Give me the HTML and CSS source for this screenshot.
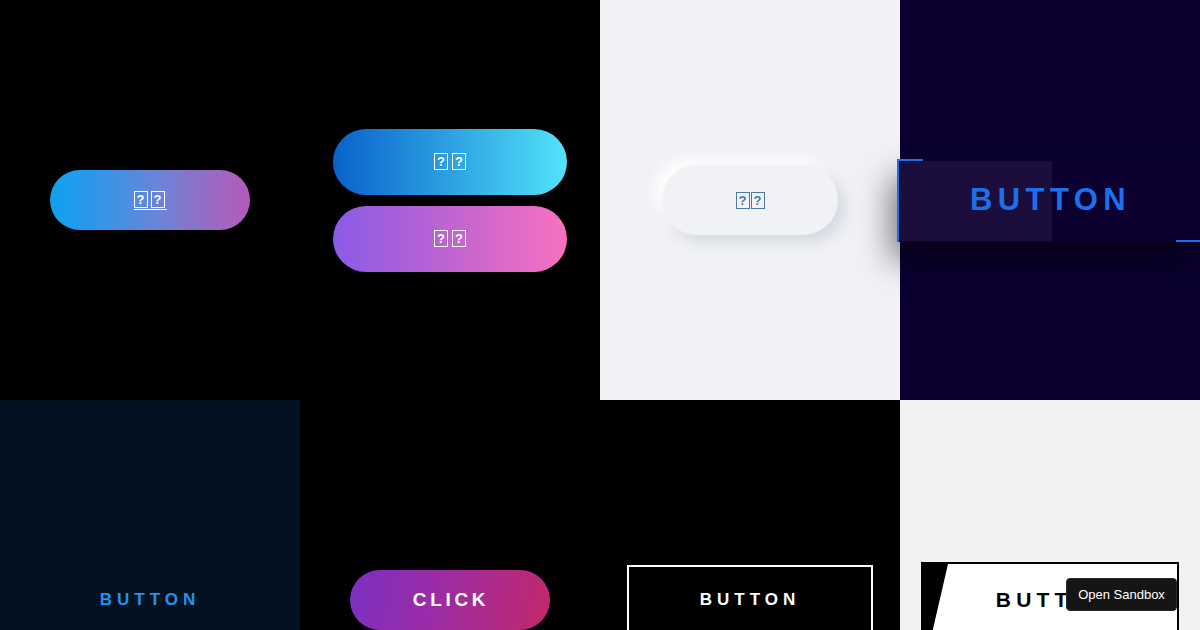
FILE: index.html
```html
<!DOCTYPE html>
<html>
<head>
<meta charset="utf-8">
<link rel="stylesheet" href="styles.css">
</head>
<body>
<div class="grid">
  <div class="cell c1">
    <button class="btn b1"><span class="label u"><span class="tofu">?</span><span class="tofu">?</span></span></button>
  </div>
  <div class="cell c2">
    <div class="stack">
      <button class="btn b2a"><span class="label sp"><span class="tofu">?</span><span class="tofu">?</span></span></button>
      <button class="btn b2b"><span class="label sp"><span class="tofu">?</span><span class="tofu">?</span></span></button>
    </div>
  </div>
  <div class="cell c3">
    <button class="btn b3"><span class="label tight"><span class="tofu">?</span><span class="tofu">?</span></span></button>
  </div>
  <div class="cell c4">
    <button class="btn b4"><span class="fill"></span><span class="txt">BUTTON</span></button>
  </div>
  <div class="cell c5">
    <button class="btn b5">BUTTON</button>
  </div>
  <div class="cell c6">
    <button class="btn b6">CLICK</button>
  </div>
  <div class="cell c7">
    <button class="btn b7">BUTTON</button>
  </div>
  <div class="cell c8">
    <button class="btn b8"><span class="slab"></span><span class="txt">BUTTON</span></button>
    <div class="sandbox">Open Sandbox</div>
  </div>
</div>
</body>
</html>
```

FILE: styles.css
```css
* { box-sizing: border-box; }
html, body { margin: 0; padding: 0; }
body {
  width: 1200px;
  height: 630px;
  overflow: hidden;
  font-family: "Liberation Sans", Arial, sans-serif;
  background: #000;
}
.grid {
  display: grid;
  grid-template-columns: repeat(4, 300px);
  grid-auto-rows: 400px;
}
.cell {
  display: flex;
  align-items: center;
  justify-content: center;
  position: relative;
}
.btn {
  border: none;
  padding: 0;
  margin: 0;
  font-family: "Liberation Sans", Arial, sans-serif;
  display: flex;
  align-items: center;
  justify-content: center;
  cursor: pointer;
}
.label {
  display: inline-flex;
  align-items: center;
  gap: 3px;
  color: #fff;
  font-size: 16px;
}
.label.u {
  gap: 3px;
  padding-bottom: 1px;
  border-bottom: 1.5px solid #fff;
  padding-right: 2px;
}
.label.sp { gap: 4px; }
.label.tight { gap: 1px; }
.tofu {
  display: inline-flex;
  align-items: center;
  justify-content: center;
  width: 14px;
  height: 17px;
  border: 1.5px solid currentColor;
  font-size: 13px;
  font-weight: bold;
  line-height: 1;
}

/* cell 1 */
.c1 { background: #000; }
.b1 {
  width: 200px;
  height: 60px;
  border-radius: 30px;
  background: linear-gradient(90deg, #10a0ef 0%, #2a98ea 20%, #6c84d6 55%, #a066c0 85%, #b25cb8 100%);
}

/* cell 2 */
.c2 { background: #000; }
.stack {
  display: flex;
  flex-direction: column;
  gap: 11px;
}
.b2a, .b2b {
  width: 234px;
  height: 66px;
  border-radius: 33px;
}
.b2a { background: linear-gradient(90deg, #0862cb 0%, #2a9ae0 45%, #52e3fa 100%); }
.b2b { background: linear-gradient(90deg, #8a5be6 0%, #c064d0 50%, #f871c0 100%); }

/* cell 3 */
.c3 { background: #f1f2f6; }
.b3 {
  width: 176px;
  height: 70px;
  border-radius: 35px;
  background: #f1f2f6;
  box-shadow: 7px 7px 14px rgba(190, 194, 205, 0.55), -7px -7px 14px #ffffff;
}
.b3 .label { color: #4b79aa; }

/* cell 4 */
.c4 { background: #0b0030; z-index: 2; }
.b4 {
  position: relative;
  width: 303px;
  height: 83px;
  margin-left: -3px;
  background: #0b0030;
  box-shadow: -6px 18px 32px rgba(0, 0, 0, 0.5);
  border-left: 2px solid #1a6ff0;
}
.b4::before {
  content: "";
  position: absolute;
  left: -2px;
  top: 0;
  width: 26px;
  border-top: 2px solid #1a6ff0;
}
.b4::after {
  content: "";
  position: absolute;
  right: 0;
  bottom: 0;
  width: 24px;
  border-bottom: 2px solid #1a6ff0;
}
.b4 .fill {
  position: absolute;
  left: 1px;
  top: 2px;
  width: 152px;
  height: 80px;
  background: #1b0e3c;
}
.b4 .txt {
  position: relative;
  color: #1c70ec;
  font-size: 31px;
  font-weight: bold;
  letter-spacing: 5.4px;
  margin-left: 2px;
}

/* cell 5 */
.c5 { background: #031120; }
.b5 {
  background: none;
  color: #2194ef;
  font-size: 17px;
  font-weight: bold;
  letter-spacing: 5px;
  height: 40px;
}

/* cell 6 */
.c6 { background: #000; }
.b6 {
  width: 200px;
  height: 60px;
  border-radius: 30px;
  background: linear-gradient(100deg, #7a30c2 0%, #9a2ca8 40%, #c2286a 100%);
  color: #fff;
  font-size: 19px;
  font-weight: bold;
  letter-spacing: 3.7px;
  padding-left: 2px;
}

/* cell 7 */
.c7 { background: #000; }
.b7 {
  width: 246px;
  height: 70px;
  background: #000;
  border: 2px solid #fff;
  color: #fff;
  font-size: 17px;
  font-weight: bold;
  letter-spacing: 5px;
}

/* cell 8 */
.c8 { background: #f2f2f2; }
.b8 {
  position: relative;
  overflow: hidden;
  width: 258px;
  height: 76px;
  background: #fff;
  border: 2px solid #000;
  color: #000;
  font-size: 21px;
  font-weight: bold;
  letter-spacing: 5.2px;
  padding-left: 10px;
}
.b8 .slab {
  position: absolute;
  left: -20px;
  top: 0;
  width: 45px;
  height: 100%;
  background: #000;
  transform: skewX(-13deg);
  transform-origin: top left;
}
.b8 .txt { position: relative; }
.sandbox {
  position: absolute;
  left: 166px;
  top: 178px;
  width: 111px;
  height: 33px;
  border-radius: 4px;
  background: #151515;
  border: 1px solid #2a2a2a;
  color: #fff;
  font-family: "Liberation Sans", Arial, sans-serif;
  font-size: 13px;
  display: flex;
  align-items: center;
  justify-content: center;
}
```
